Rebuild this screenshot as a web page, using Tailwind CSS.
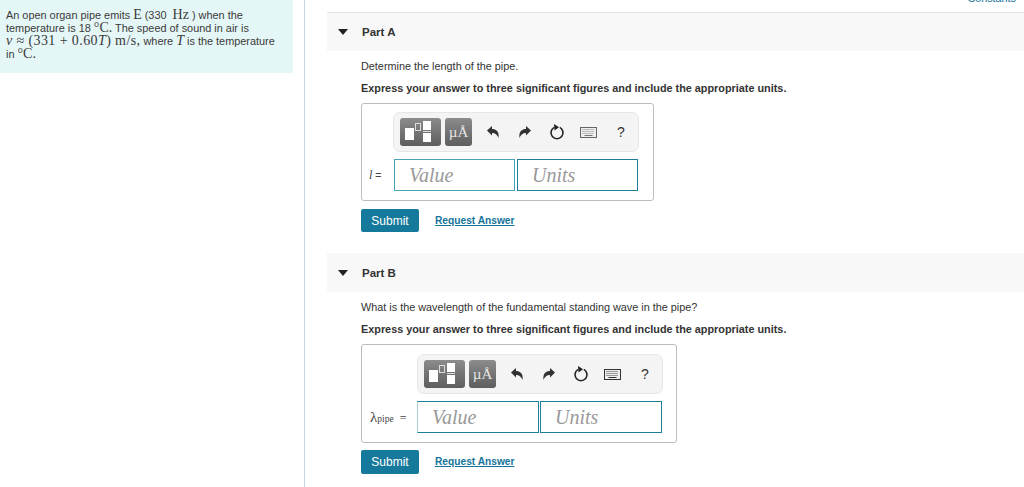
<!DOCTYPE html>
<html lang="en">
<head>
  <meta charset="UTF-8" />
  <title>Open organ pipe</title>
  <script src="https://cdn.jsdelivr.net/npm/@tailwindcss/browser@4"></script>
</head>
<body class="bg-white text-[#333] font-['Liberation_Sans',sans-serif] overflow-hidden">
  <div class="flex h-[487px] w-[1024px] relative overflow-hidden">

    <!-- Constants link, cut off by the top edge -->
    <a class="absolute right-[8px] top-[-8px] text-[10.8px] leading-[13px] text-[#14749a]">Constants</a>

    <!-- Problem statement -->
    <aside class="w-[305px] h-full shrink-0 border-r border-[#c6d6e8]">
      <div class="w-[293px] h-[73px] bg-[#e5f6f6] pl-[6px] pt-[8px] text-[10.9px] leading-[13px] text-[#3a3a3a] whitespace-nowrap">
        <div class="h-[13px]">An open organ pipe emits <span class="font-['Liberation_Serif',serif] text-[14px]">E</span> (330 &nbsp;<span class="font-['Liberation_Serif',serif] text-[14px]">Hz</span> ) when the</div>
        <div class="h-[13px]">temperature is 18 <span class="font-['Liberation_Serif',serif] text-[14px]">&deg;C.</span> The speed of sound in air is</div>
        <div class="h-[13px]"><span class="font-['Liberation_Serif',serif] text-[14px] tracking-[0.4px]"><i>v</i> &asymp; (331 + 0.60<i>T</i>) m/s,</span> where <span class="font-['Liberation_Serif',serif] text-[14px] italic">T</span> is the temperature</div>
        <div class="h-[13px]">in <span class="font-['Liberation_Serif',serif] text-[14px]">&deg;C.</span></div>
      </div>
    </aside>

    <main class="flex-1 pl-[22px] pt-[12px] min-w-0">

      <!-- Part A -->
      <section class="h-[241px]">
        <div class="h-[39px] bg-[#f8f8f8] border-t border-[#e6e6e6] flex items-center text-[11.5px] font-bold text-[#333]">
          <span class="w-0 h-0 ml-[11px] border-x-[5px] border-x-transparent border-t-[6px] border-t-[#222]"></span>
          <span class="ml-[14px] mt-[1px]">Part A</span>
        </div>
        <div class="pl-[34px]">
          <p class="mt-[9px] text-[10.85px] leading-[13px]">Determine the length of the pipe.</p>
          <p class="mt-[9px] text-[10.85px] leading-[13px] font-bold">Express your answer to three significant figures and include the appropriate units.</p>
          <div class="mt-[8px] w-[293px] h-[98px] border border-[#bdbdbd] rounded-[3px] pl-[31px] pt-[8px]">
            <div class="w-[246px] h-[40px] bg-[#f4f4f4] border border-[#e6e6e6] rounded-[7px] flex items-center pl-[6px]">
              <button class="w-[41px] h-[28px] rounded-[3px] bg-gradient-to-b from-[#8c8c8c] to-[#5e5e5e]">
                <svg width="41" height="28" viewBox="0 0 41 28"><rect x="5" y="10" width="9" height="12" fill="#fff"/><rect x="15.5" y="5.5" width="5" height="7" fill="none" stroke="#ddd"/><rect x="23" y="3" width="8" height="9" fill="#fff"/><rect x="23" y="13" width="8" height="1" fill="#ddd"/><rect x="23" y="15" width="8" height="9" fill="#fff"/></svg>
              </button>
              <button class="ml-[4px] w-[27px] h-[28px] rounded-[3px] bg-gradient-to-b from-[#8c8c8c] to-[#5e5e5e] text-[#e6e6e6] font-['Liberation_Serif',serif] text-[15px] leading-[28px]">&micro;&Aring;</button>
              <svg class="ml-[14px]" width="14" height="14" viewBox="0 0 14 14"><path d="M1 5.5 L6 1 V4 C10 4 13.5 6.5 12.5 13 C11.5 10 9.5 8 6 8 V10.5 Z" fill="#333"/></svg>
              <svg class="ml-[18px]" width="14" height="14" viewBox="0 0 14 14"><path d="M13 5.5 L8 1 V4 C4 4 0.5 6.5 1.5 13 C2.5 10 4.5 8 8 8 V10.5 Z" fill="#333"/></svg>
              <svg class="ml-[17px]" width="16" height="16" viewBox="0 0 16 16"><path d="M10.8 3.4 A6 6 0 1 1 5.2 3.4" fill="none" stroke="#222" stroke-width="1.6"/><path d="M5 0 L10 3.2 L5.5 6.5 Z" fill="#222"/></svg>
              <svg class="ml-[15px]" width="17" height="11" viewBox="0 0 17 11"><rect x="0.5" y="0.5" width="16" height="10" fill="#eee" stroke="#666"/><path d="M2.5 2.5h12M2.5 4.5h12M2.5 6.5h12" stroke="#888" stroke-dasharray="1 1"/><path d="M4.5 8.5h8" stroke="#777"/></svg>
              <span class="ml-[20px] text-[14px] text-[#333]">?</span>
            </div>
            <div class="flex items-center -ml-[24px] mt-[7px]">
              <span class="w-[25px] text-[10.5px] text-[#444]"><i class="font-['Liberation_Serif',serif] text-[12px]">l</i> =</span>
              <input placeholder="Value" class="w-[121px] h-[32px] border border-[#4ba3b8] pl-[14px] font-['Liberation_Serif',serif] italic text-[20px] placeholder:text-[#999]" />
              <input placeholder="Units" class="ml-[2px] w-[121px] h-[32px] border border-[#1d7f9b] pl-[14px] font-['Liberation_Serif',serif] italic text-[20px] placeholder:text-[#999]" />
            </div>
          </div>
          <div class="flex items-center mt-[8px]">
            <button class="w-[58px] h-[23px] bg-[#14799b] rounded-[2px] text-white text-[12px]">Submit</button>
            <a class="ml-[16px] text-[10.2px] font-bold text-[#14749a] underline">Request Answer</a>
          </div>
        </div>
      </section>

      <!-- Part B -->
      <section>
        <div class="h-[39px] bg-[#f8f8f8] flex items-center text-[11.5px] font-bold text-[#333]">
          <span class="w-0 h-0 ml-[11px] border-x-[5px] border-x-transparent border-t-[6px] border-t-[#222]"></span>
          <span class="ml-[14px] mt-[2px]">Part B</span>
        </div>
        <div class="pl-[34px]">
          <p class="mt-[9px] text-[10.85px] leading-[13px]">What is the wavelength of the fundamental standing wave in the pipe?</p>
          <p class="mt-[9px] text-[10.85px] leading-[13px] font-bold">Express your answer to three significant figures and include the appropriate units.</p>
          <div class="mt-[8px] w-[316px] h-[99px] border border-[#bdbdbd] rounded-[3px] pl-[55px] pt-[9px]">
            <div class="w-[246px] h-[40px] bg-[#f4f4f4] border border-[#e6e6e6] rounded-[7px] flex items-center pl-[6px]">
              <button class="w-[41px] h-[28px] rounded-[3px] bg-gradient-to-b from-[#8c8c8c] to-[#5e5e5e]">
                <svg width="41" height="28" viewBox="0 0 41 28"><rect x="5" y="10" width="9" height="12" fill="#fff"/><rect x="15.5" y="5.5" width="5" height="7" fill="none" stroke="#ddd"/><rect x="23" y="3" width="8" height="9" fill="#fff"/><rect x="23" y="13" width="8" height="1" fill="#ddd"/><rect x="23" y="15" width="8" height="9" fill="#fff"/></svg>
              </button>
              <button class="ml-[4px] w-[27px] h-[28px] rounded-[3px] bg-gradient-to-b from-[#8c8c8c] to-[#5e5e5e] text-[#e6e6e6] font-['Liberation_Serif',serif] text-[15px] leading-[28px]">&micro;&Aring;</button>
              <svg class="ml-[14px]" width="14" height="14" viewBox="0 0 14 14"><path d="M1 5.5 L6 1 V4 C10 4 13.5 6.5 12.5 13 C11.5 10 9.5 8 6 8 V10.5 Z" fill="#333"/></svg>
              <svg class="ml-[18px]" width="14" height="14" viewBox="0 0 14 14"><path d="M13 5.5 L8 1 V4 C4 4 0.5 6.5 1.5 13 C2.5 10 4.5 8 8 8 V10.5 Z" fill="#333"/></svg>
              <svg class="ml-[17px]" width="16" height="16" viewBox="0 0 16 16"><path d="M10.8 3.4 A6 6 0 1 1 5.2 3.4" fill="none" stroke="#222" stroke-width="1.6"/><path d="M5 0 L10 3.2 L5.5 6.5 Z" fill="#222"/></svg>
              <svg class="ml-[15px]" width="17" height="11" viewBox="0 0 17 11"><rect x="0.5" y="0.5" width="16" height="10" fill="#eee" stroke="#333"/><path d="M2.5 2.5h12M2.5 4.5h12M2.5 6.5h12" stroke="#444" stroke-dasharray="1 1"/><path d="M4.5 8.5h8" stroke="#333"/></svg>
              <span class="ml-[20px] text-[14px] text-[#333]">?</span>
            </div>
            <div class="flex items-center -ml-[47px] mt-[7px]">
              <span class="w-[47px] text-[12px] text-[#444] font-['Liberation_Serif',serif] whitespace-nowrap"><span class="text-[15px]">&lambda;</span><span class="text-[9.5px]">pipe</span> &nbsp;=</span>
              <input placeholder="Value" class="w-[122px] h-[32px] border border-[#1d7f9b] border-l-[#a8d0da] pl-[14px] font-['Liberation_Serif',serif] italic text-[20px] placeholder:text-[#999]" />
              <input placeholder="Units" class="ml-[1px] w-[122px] h-[32px] border border-[#1d7f9b] pl-[14px] font-['Liberation_Serif',serif] italic text-[20px] placeholder:text-[#999]" />
            </div>
          </div>
          <div class="flex items-center mt-[7px]">
            <button class="w-[58px] h-[24px] bg-[#14799b] rounded-[2px] text-white text-[12px]">Submit</button>
            <a class="ml-[16px] text-[10.2px] font-bold text-[#14749a] underline">Request Answer</a>
          </div>
        </div>
      </section>
    </main>
  </div>
</body>
</html>
